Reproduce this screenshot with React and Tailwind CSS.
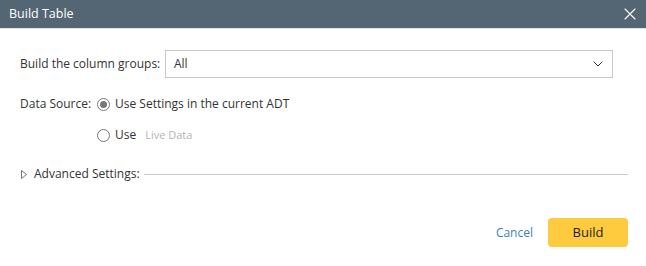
import { ChevronDown, X } from 'lucide-react';

const BuildTableDialog = () => {
  return (
    <div className="w-[646px] h-[266px] bg-white flex flex-col text-[12px] text-[#333] font-['Open_Sans',sans-serif]">
      {/* Header */}
      <div className="h-[29px] shrink-0 bg-[#546673] border-b border-[#e3e6e8] flex items-center justify-between pl-[9px] pr-[6px]">
        <span className="text-white text-[12.5px]">Build Table</span>
        <X className="w-[20px] h-[20px] text-white" strokeWidth={1.3} />
      </div>

      {/* Body */}
      <div className="flex-1 flex flex-col px-[20px] pt-[21px]">
        <div className="flex items-center">
          <span className="w-[145px] shrink-0 whitespace-nowrap">Build the column groups:</span>
          <div className="w-[448px] h-[28px] border border-[#c9c9c9] flex items-center justify-between pl-[8px] pr-[6px]">
            <span>All</span>
            <ChevronDown className="w-[16px] h-[16px] text-[#333]" strokeWidth={1.5} />
          </div>
        </div>

        <div className="flex items-start mt-[14px]">
          <span className="w-[77px] shrink-0 whitespace-nowrap leading-[24px]">Data Source:</span>
          <div className="flex flex-col gap-[7px]">
            <label className="flex items-center gap-[5px] h-[24px]">
              <span className="w-[13px] h-[13px] rounded-full border border-[#777] flex items-center justify-center">
                <span className="w-[7px] h-[7px] rounded-full bg-[#777]" />
              </span>
              <span>Use Settings in the current ADT</span>
            </label>
            <label className="flex items-center gap-[5px] h-[24px]">
              <span className="w-[13px] h-[13px] rounded-full border border-[#777]" />
              <span>Use</span>
              <span className="ml-[4px] text-[11px] text-[#b5b5b5]">Live Data</span>
            </label>
          </div>
        </div>

        <div className="flex items-center h-[18px] mt-[18px]">
          <svg width="6" height="9" viewBox="0 0 6 9" className="ml-[1px] mr-[7px]">
            <path d="M0.5 0.5 L5.5 4.5 L0.5 8.5 Z" fill="none" stroke="#777" strokeWidth="1" />
          </svg>
          <span className="whitespace-nowrap">Advanced Settings:</span>
          <div className="flex-1 h-px bg-[#c8c8c8] ml-[4px] mr-[-2px]" />
        </div>

        <div className="flex items-center justify-end mt-[35px] gap-[15px] mr-[-2px]">
          <button className="text-[#3a7fc1] text-[12px]">Cancel</button>
          <button className="w-[80px] h-[29px] rounded-[4px] bg-[#fecb3f] text-[#222] text-[13px]">
            Build
          </button>
        </div>
      </div>
    </div>
  );
};

export default function App() {
  return <BuildTableDialog />;
}
